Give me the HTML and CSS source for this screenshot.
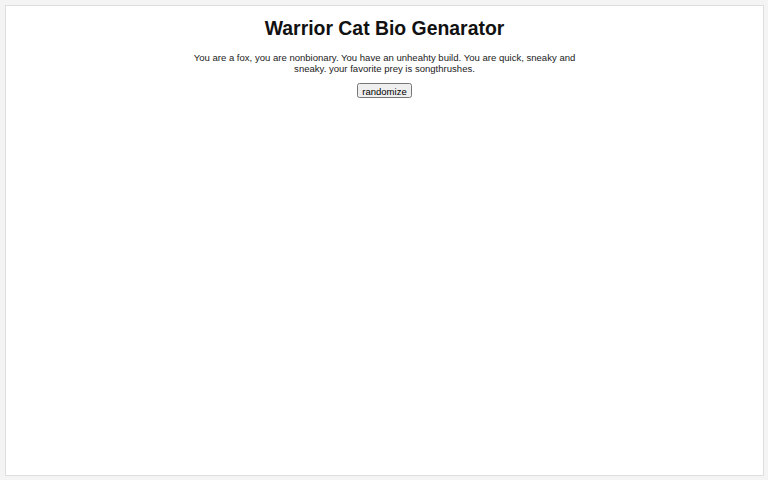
FILE: index.html
```html
<!DOCTYPE html>
<html lang="en">
<head>
  <meta charset="UTF-8" />
  <title>Warrior Cat Bio Genarator</title>
  <link rel="stylesheet" href="styles.css">
</head>
<body>
  <div class="page">
    <h1>Warrior Cat Bio Genarator</h1>
    <p class="bio" id="bio">You are a fox, you are nonbionary. You have an unheahty build. You are quick, sneaky and sneaky. your favorite prey is songthrushes.</p>
    <button class="randomize">randomize</button>
  </div>
</body>
</html>
```

FILE: styles.css
```css
body {
  font-family: "Liberation Sans", Arial, sans-serif;
  margin: 0;
  padding: 5px 4px 4px 5px;
  background-color: #f4f4f4;
}
.page {
  background-color: #fff;
  border: 1px solid #dedede;
  height: 471px;
  box-sizing: border-box;
  text-align: center;
  padding-top: 11px;
}
h1 {
  font-size: 19.4px;
  margin: 0 0 12px 0;
  color: #111;
}
.bio {
  font-size: 9.55px;
  line-height: 11px;
  color: #222;
  max-width: 390px;
  margin: 0 auto 7px auto;
}
.randomize {
  font-family: "Liberation Sans", Arial, sans-serif;
  font-size: 9.5px;
  padding: 0 3px;
  height: 15px;
  line-height: 13px;
}
```
